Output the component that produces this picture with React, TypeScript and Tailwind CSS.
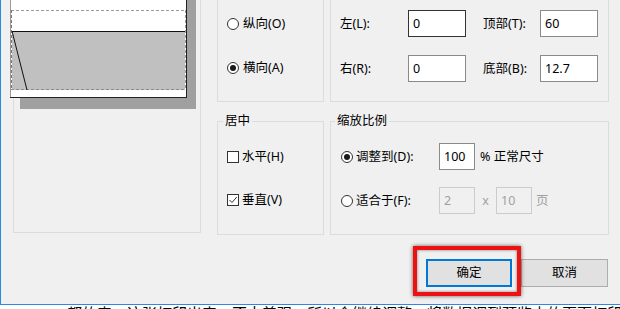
import React from "react";

const Radio = ({ checked }: { checked?: boolean }) => (
  <span className="w-[12px] h-[12px] rounded-full border border-[#333333] bg-white flex items-center justify-center shrink-0">
    {checked && <span className="w-[6px] h-[6px] rounded-full bg-[#1a1a1a]" />}
  </span>
);

const Check = ({ checked }: { checked?: boolean }) => (
  <span className="w-[12px] h-[12px] border border-[#333333] bg-white flex items-center justify-center shrink-0">
    {checked && (
      <svg width="10" height="10" viewBox="0 0 10 10">
        <path d="M1.5 5 L4 7.5 L8.8 2" fill="none" stroke="#333" strokeWidth="1" />
      </svg>
    )}
  </span>
);

const Input = ({ value, focused, disabled, w }: { value: string; focused?: boolean; disabled?: boolean; w: string }) => (
  <div
    className={
      (focused
        ? "border-[#333333] bg-white text-black "
        : disabled
        ? "border-[#cccccc] bg-[#f0f0f0] text-[#a0a0a0] "
        : "border-[#8a8a8a] bg-white text-black ") +
      w +
      " h-[27px] border flex items-center pl-[4px] text-[12.5px] shrink-0"
    }
  >
    {value}
  </div>
);

export default function App() {
  return (
    <div className="w-[620px] h-[309px] overflow-hidden bg-white font-['Noto_Sans','Noto_Sans_CJK_SC',sans-serif] text-[12.5px] leading-[16px] text-black relative">
      <div className="h-[305px] bg-[#f0f0f0] border-l border-b border-[#2a8ae2] flex flex-col">
        <div className="flex h-[235px] shrink-0">
          {/* preview */}
          <div className="ml-[12px] w-[188px] h-[233px] border-l border-r border-b border-[#dcdcdc] shrink-0">
            <svg width="187" height="110" viewBox="0 0 187 110" className="-ml-[4px] block">
              <rect x="10" y="0" width="176" height="109" fill="#a0a0a0" />
              <rect x="0" y="0" width="177" height="98" fill="#ffffff" />
              <line x1="0.5" y1="0" x2="0.5" y2="98" stroke="#9a9a9a" />
              <line x1="176.5" y1="0" x2="176.5" y2="98" stroke="#222" />
              <line x1="0" y1="97.5" x2="177" y2="97.5" stroke="#222" />
              <rect x="2" y="31" width="173" height="59" fill="#c0c0c0" />
              <line x1="1" y1="10.5" x2="176" y2="10.5" stroke="#9a9a9a" strokeDasharray="3 2" />
              <line x1="1.5" y1="10" x2="1.5" y2="90" stroke="#777" strokeDasharray="3 2" />
              <line x1="175.5" y1="10" x2="175.5" y2="90" stroke="#9a9a9a" strokeDasharray="3 2" />
              <line x1="1" y1="89.5" x2="176" y2="89.5" stroke="#8a8a8a" strokeDasharray="3 2" />
              <line x1="2" y1="31.5" x2="175" y2="31.5" stroke="#111" />
              <line x1="2" y1="31" x2="17" y2="90" stroke="#111" />
            </svg>
          </div>

          {/* middle column */}
          <div className="ml-[16px] w-[107px] flex flex-col shrink-0">
            <div className="h-[102px] border-l border-r border-b border-[#dcdcdc] pl-[9px] pt-[16px] flex flex-col gap-[28px]">
              <div className="h-[16px] flex items-center">
                <Radio />
                <span className="ml-[4px]">纵向(O)</span>
              </div>
              <div className="h-[16px] flex items-center">
                <Radio checked />
                <span className="ml-[4px]">横向(A)</span>
              </div>
            </div>
            <div className="mt-[19px] h-[114px] border border-[#dcdcdc] relative pl-[9px] pt-[27px] flex flex-col gap-[27px]">
              <span className="absolute -top-[9px] left-[5px] px-[2px] bg-[#f0f0f0]">居中</span>
              <div className="h-[16px] flex items-center">
                <Check />
                <span className="ml-[3px]">水平(H)</span>
              </div>
              <div className="h-[16px] flex items-center">
                <Check checked />
                <span className="ml-[3px]">垂直(V)</span>
              </div>
            </div>
          </div>

          {/* right column */}
          <div className="ml-[6px] w-[279px] flex flex-col shrink-0">
            <div className="h-[102px] border-l border-r border-b border-[#dcdcdc] pl-[9px] pt-[10px] flex flex-col gap-[18px]">
              <div className="flex items-center">
                <span className="w-[68px] shrink-0">左(L):</span>
                <Input value="0" focused w="w-[58px]" />
                <span className="ml-[17px] w-[57px] shrink-0">顶部(T):</span>
                <Input value="60" w="w-[58px]" />
              </div>
              <div className="flex items-center">
                <span className="w-[68px] shrink-0">右(R):</span>
                <Input value="0" w="w-[58px]" />
                <span className="ml-[17px] w-[57px] shrink-0">底部(B):</span>
                <Input value="12.7" w="w-[58px]" />
              </div>
            </div>
            <div className="mt-[19px] h-[114px] border border-[#dcdcdc] relative pl-[10px] pt-[21px] flex flex-col gap-[17px]">
              <span className="absolute -top-[9px] left-[4px] px-[2px] bg-[#f0f0f0]">缩放比例</span>
              <div className="flex items-center">
                <div className="w-[98px] flex items-center shrink-0">
                  <Radio checked />
                  <span className="ml-[3px]">调整到(D):</span>
                </div>
                <Input value="100" w="w-[36px]" />
                <span className="ml-[5px]">% 正常尺寸</span>
              </div>
              <div className="flex items-center">
                <div className="w-[98px] flex items-center shrink-0">
                  <Radio />
                  <span className="ml-[3px]">适合于(F):</span>
                </div>
                <Input value="2" disabled w="w-[36px]" />
                <span className="w-[21px] text-center text-[#a0a0a0]">x</span>
                <Input value="10" disabled w="w-[36px]" />
                <span className="ml-[4px] text-[#a0a0a0]">页</span>
              </div>
            </div>
          </div>
        </div>

        {/* buttons */}
        <div className="mt-[24px] ml-[425px] flex gap-[9px]">
          <button className="w-[86px] h-[28px] bg-[#e1e1e1] border-2 border-[#0078d7] flex items-center justify-center text-[12.5px] shrink-0">
            确定
          </button>
          <button className="w-[87px] h-[28px] bg-[#e1e1e1] border border-[#adadad] flex items-center justify-center text-[12.5px] shrink-0">
            取消
          </button>
        </div>
      </div>

      <div className="pl-[67px] text-[15px] leading-[15px] whitespace-nowrap font-['Noto_Sans_CJK_SC',sans-serif]">
        都的表，这张打印出来，不太美观，所以会继续调整，将数据调到预览中的页面打印，那如何实现
      </div>

      {/* red highlight annotation */}
      <div className="absolute left-[413px] top-[246px] w-[108px] h-[50px] border-[4px] border-[#ee1111] shadow-[0_0_4px_rgba(0,0,0,0.6),inset_0_0_3px_rgba(0,0,0,0.5)]" />
    </div>
  );
}
